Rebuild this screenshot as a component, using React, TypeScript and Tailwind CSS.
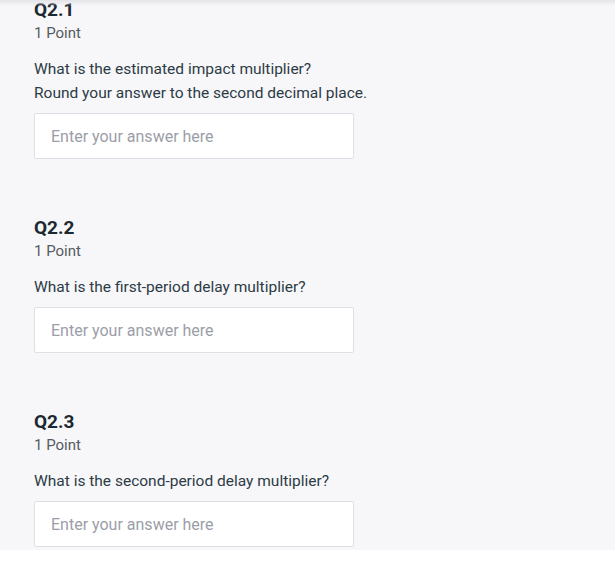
const questions = [
	{
		id: "2.1",
		points: "1 Point",
		lines: [
			"What is the estimated impact multiplier?",
			"Round your answer to the second decimal place.",
		],
	},
	{
		id: "2.2",
		points: "1 Point",
		lines: ["What is the first-period delay multiplier?"],
	},
	{
		id: "2.3",
		points: "1 Point",
		lines: ["What is the second-period delay multiplier?"],
	},
];

function Question({ q }: { q: (typeof questions)[number] }) {
	return (
		<section className="mb-[59px]">
			<h2 className="mb-0.5 text-[19px] leading-5 font-bold text-[#1c2930]">Q{q.id}</h2>
			<p className="text-[15px] leading-[22px] text-[#555b62]">{q.points}</p>
			<div className="mt-[13px] text-[15.5px] leading-6 text-[#2d3b45]">
				{q.lines.map((line) => (
					<p key={line}>{line}</p>
				))}
			</div>
			<input
				type="text"
				placeholder="Enter your answer here"
				className="mt-2 block w-[320px] h-[46px] rounded-[2px] border border-[#dfdfe6] bg-white px-4 text-[16px] text-[#2d3b45] placeholder:text-[#9b9ea8] outline-none"
			/>
		</section>
	);
}

export default function App() {
	return (
		<div className="min-h-[566px] bg-white font-['Roboto',sans-serif]">
			<div className="relative h-[550px] overflow-hidden bg-[#f7f7f9]">
				<div className="absolute inset-x-0 top-0 h-[6px] bg-gradient-to-b from-[#e4e4e8] to-transparent" />
				<div className="pl-[34px]">
					{questions.map((q) => (
						<Question key={q.id} q={q} />
					))}
				</div>
			</div>
		</div>
	);
}
